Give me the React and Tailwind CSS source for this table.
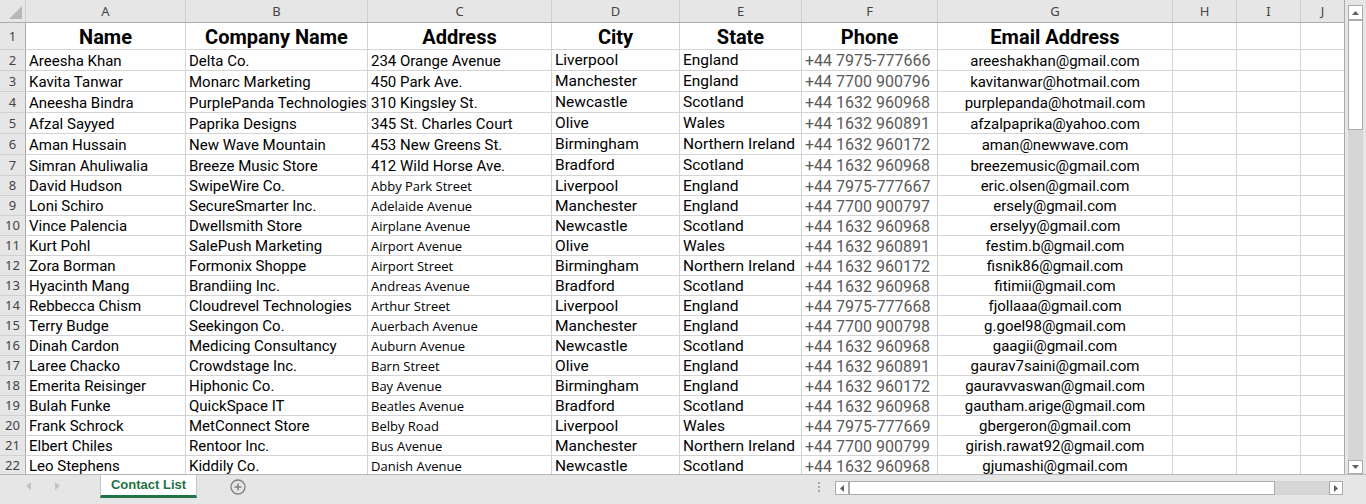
import React from "react";

const rows = [
  ["Areesha Khan", "Delta Co.", "234 Orange Avenue", "Liverpool", "England", "+44 7975-777666", "areeshakhan@gmail.com"],
  ["Kavita Tanwar", "Monarc Marketing", "450 Park Ave.", "Manchester", "England", "+44 7700 900796", "kavitanwar@hotmail.com"],
  ["Aneesha Bindra", "PurplePanda Technologies", "310 Kingsley St.", "Newcastle", "Scotland", "+44 1632 960968", "purplepanda@hotmail.com"],
  ["Afzal Sayyed", "Paprika Designs", "345 St. Charles Court", "Olive", "Wales", "+44 1632 960891", "afzalpaprika@yahoo.com"],
  ["Aman Hussain", "New Wave Mountain", "453 New Greens St.", "Birmingham", "Northern Ireland", "+44 1632 960172", "aman@newwave.com"],
  ["Simran Ahuliwalia", "Breeze Music Store", "412 Wild Horse Ave.", "Bradford", "Scotland", "+44 1632 960968", "breezemusic@gmail.com"],
  ["David Hudson", "SwipeWire Co.", "Abby Park Street", "Liverpool", "England", "+44 7975-777667", "eric.olsen@gmail.com"],
  ["Loni Schiro", "SecureSmarter Inc.", "Adelaide Avenue", "Manchester", "England", "+44 7700 900797", "ersely@gmail.com"],
  ["Vince Palencia", "Dwellsmith Store", "Airplane Avenue", "Newcastle", "Scotland", "+44 1632 960968", "erselyy@gmail.com"],
  ["Kurt Pohl", "SalePush Marketing", "Airport Avenue", "Olive", "Wales", "+44 1632 960891", "festim.b@gmail.com"],
  ["Zora Borman", "Formonix Shoppe", "Airport Street", "Birmingham", "Northern Ireland", "+44 1632 960172", "fisnik86@gmail.com"],
  ["Hyacinth Mang", "Brandiing Inc.", "Andreas Avenue", "Bradford", "Scotland", "+44 1632 960968", "fitimii@gmail.com"],
  ["Rebbecca Chism", "Cloudrevel Technologies", "Arthur Street", "Liverpool", "England", "+44 7975-777668", "fjollaaa@gmail.com"],
  ["Terry Budge", "Seekingon Co.", "Auerbach Avenue", "Manchester", "England", "+44 7700 900798", "g.goel98@gmail.com"],
  ["Dinah Cardon", "Medicing Consultancy", "Auburn Avenue", "Newcastle", "Scotland", "+44 1632 960968", "gaagii@gmail.com"],
  ["Laree Chacko", "Crowdstage Inc.", "Barn Street", "Olive", "England", "+44 1632 960891", "gaurav7saini@gmail.com"],
  ["Emerita Reisinger", "Hiphonic Co.", "Bay Avenue", "Birmingham", "England", "+44 1632 960172", "gauravvaswan@gmail.com"],
  ["Bulah Funke", "QuickSpace IT", "Beatles Avenue", "Bradford", "Scotland", "+44 1632 960968", "gautham.arige@gmail.com"],
  ["Frank Schrock", "MetConnect Store", "Belby Road", "Liverpool", "Wales", "+44 7975-777669", "gbergeron@gmail.com"],
  ["Elbert Chiles", "Rentoor Inc.", "Bus Avenue", "Manchester", "Northern Ireland", "+44 7700 900799", "girish.rawat92@gmail.com"],
  ["Leo Stephens", "Kiddily Co.", "Danish Avenue", "Newcastle", "Scotland", "+44 1632 960968", "gjumashi@gmail.com"],
];

const widths = [
  "w-[160px]",
  "w-[182px]",
  "w-[184px]",
  "w-[128px]",
  "w-[122px]",
  "w-[136px]",
  "w-[235px]",
  "w-[64px]",
  "w-[64px]",
  "w-[43px]",
];
const letters = ["A", "B", "C", "D", "E", "F", "G", "H", "I", "J"];
const headers = ["Name", "Company Name", "Address", "City", "State", "Phone", "Email Address"];

function RowHead({ n, h }) {
  return (
    <div
      className={`w-[26px] shrink-0 ${h} bg-[#e6e6e6] border-r border-b border-r-[#ababab] border-b-[#d0d0d0] flex items-center justify-center pt-[1px] text-[13px] text-[#444] font-['Noto_Sans',sans-serif]`}
    >
      {n}
    </div>
  );
}

function Cell({ i, children, className = "" }) {
  const last = i === 9;
  return (
    <div
      className={`${widths[i]} shrink-0 h-full border-b border-[#d4d4d4] ${last ? "" : "border-r"} flex items-center overflow-hidden whitespace-nowrap ${className}`}
    >
      {children}
    </div>
  );
}

function DataRow({ n, r, h }) {
  const roboto = "font-['Roboto',sans-serif] pt-[2px]";
  const smallAddr = n >= 8;
  return (
    <div className={`flex ${h}`}>
      <RowHead n={n} h="h-full" />
      <Cell i={0} className={`pl-[3px] ${roboto} text-[15px] text-black`}>{r[0]}</Cell>
      <Cell i={1} className={`pl-[3px] ${roboto} text-[15px] text-black`}>{r[1]}</Cell>
      <Cell
        i={2}
        className={
          smallAddr
            ? "pl-[3px] font-['Open_Sans',sans-serif] text-[13px] text-black pt-[3px]"
            : `pl-[3px] ${roboto} text-[15px] text-black`
        }
      >
        {r[2]}
      </Cell>
      <Cell i={3} className={`pl-[3px] ${roboto} text-[15.5px] text-black`}>{r[3]}</Cell>
      <Cell i={4} className={`pl-[3px] ${roboto} text-[15.5px] text-black`}>{r[4]}</Cell>
      <Cell i={5} className={`pl-[3px] ${roboto} text-[16px] text-[#595959]`}>{r[5]}</Cell>
      <Cell i={6} className={`justify-center ${roboto} text-[15px] text-black`}>{r[6]}</Cell>
      <Cell i={7} />
      <Cell i={8} />
      <Cell i={9} />
    </div>
  );
}

export default function App() {
  return (
    <div className="w-[1366px] h-[504px] overflow-hidden flex flex-col bg-[#e6e6e6]">
      <div className="flex h-[474px] shrink-0">
        {/* Sheet grid */}
        <div className="w-[1345px] shrink-0 h-full overflow-hidden bg-white border-r border-[#ababab]">
          {/* Column headers */}
          <div className="flex h-[23px] bg-[#e6e6e6] border-b border-[#ababab]">
            <div className="w-[26px] shrink-0 h-full border-r border-[#d0d0d0] relative">
              <svg className="absolute left-[9px] top-[6px]" width="13" height="13" viewBox="0 0 13 13">
                <polygon points="13,0 13,13 0,13" fill="#b7b7b7" />
              </svg>
            </div>
            {letters.map((l, i) => (
              <div
                key={l}
                className={`${widths[i]} shrink-0 h-full ${i === 9 ? "" : "border-r"} border-[#d0d0d0] flex items-center justify-center pt-[1px] text-[13px] text-[#444] font-['Noto_Sans',sans-serif]`}
              >
                {l}
              </div>
            ))}
          </div>
          {/* Row 1 headers */}
          <div className="flex h-[27px]">
            <RowHead n={1} h="h-full" />
            {headers.map((t, i) => (
              <Cell key={t} i={i} className="justify-center pt-[2px] font-['Roboto',sans-serif] font-bold text-[20px] text-black">
                {t}
              </Cell>
            ))}
            <Cell i={7} />
            <Cell i={8} />
            <Cell i={9} />
          </div>
          {rows.map((r, idx) => {
            const n = idx + 2;
            return <DataRow key={n} n={n} r={r} h={n <= 7 ? "h-[21px]" : "h-[20px]"} />;
          })}
        </div>
        {/* Vertical scrollbar */}
        <div className="w-[21px] shrink-0 h-full bg-[#e6e6e6] flex flex-col pt-[5px] pl-[3px] pr-[3px]">
          <div className="h-[15px] w-[15px] bg-white border border-[#ababab] flex items-center justify-center">
            <svg width="7" height="4" viewBox="0 0 7 4">
              <polygon points="3.5,0 7,4 0,4" fill="#606060" />
            </svg>
          </div>
          <div className="h-[110px] w-[15px] bg-white border border-[#ababab]" />
          <div className="flex-1 w-[15px] bg-[#d6d6d6]" />
          <div className="h-[14px] w-[15px] bg-white border border-[#ababab] flex items-center justify-center">
            <svg width="7" height="4" viewBox="0 0 7 4">
              <polygon points="0,0 7,0 3.5,4" fill="#606060" />
            </svg>
          </div>
        </div>
      </div>
      {/* Bottom bar */}
      <div className="h-[30px] shrink-0 flex items-start bg-[#e6e6e6] border-t border-[#b5b5b5]">
        <div className="w-[100px] shrink-0 h-[22px] flex items-center">
          <svg className="ml-[26px]" width="5" height="8" viewBox="0 0 5 8">
            <polygon points="5,0 5,8 0,4" fill="#c2c2c2" />
          </svg>
          <svg className="ml-[24px]" width="5" height="8" viewBox="0 0 5 8">
            <polygon points="0,0 5,4 0,8" fill="#c2c2c2" />
          </svg>
        </div>
        <div className="w-[97px] shrink-0 h-[23px] bg-white border-l border-r border-[#c6c6c6] border-b-[3px] border-b-[#217346] flex items-center justify-center font-['Liberation_Sans',sans-serif] font-bold text-[13px] text-[#217346]">
          Contact List
        </div>
        <div className="ml-[33px] h-[24px] flex items-center">
          <svg width="16" height="16" viewBox="0 0 16 16">
            <circle cx="8" cy="8" r="7" fill="none" stroke="#808080" strokeWidth="1.3" />
            <path d="M8 4.5v7M4.5 8h7" stroke="#808080" strokeWidth="1.5" />
          </svg>
        </div>
        <div className="ml-[572px] h-[24px] flex flex-col items-center justify-center gap-[2px]">
          <span className="w-[2px] h-[2px] bg-[#a6a6a6]" />
          <span className="w-[2px] h-[2px] bg-[#a6a6a6]" />
          <span className="w-[2px] h-[2px] bg-[#a6a6a6]" />
        </div>
        <div className="ml-[15px] mt-[6px] flex h-[14px]">
          <div className="w-[14px] h-[14px] bg-white border border-[#ababab] flex items-center justify-center">
            <svg width="4" height="7" viewBox="0 0 4 7">
              <polygon points="4,0 4,7 0,3.5" fill="#606060" />
            </svg>
          </div>
          <div className="w-[426px] h-[14px] bg-white border border-[#ababab]" />
          <div className="w-[54px] h-[14px] bg-[#d6d6d6]" />
          <div className="w-[14px] h-[14px] bg-white border border-[#ababab] flex items-center justify-center">
            <svg width="4" height="7" viewBox="0 0 4 7">
              <polygon points="0,0 4,3.5 0,7" fill="#606060" />
            </svg>
          </div>
        </div>
      </div>
    </div>
  );
}
